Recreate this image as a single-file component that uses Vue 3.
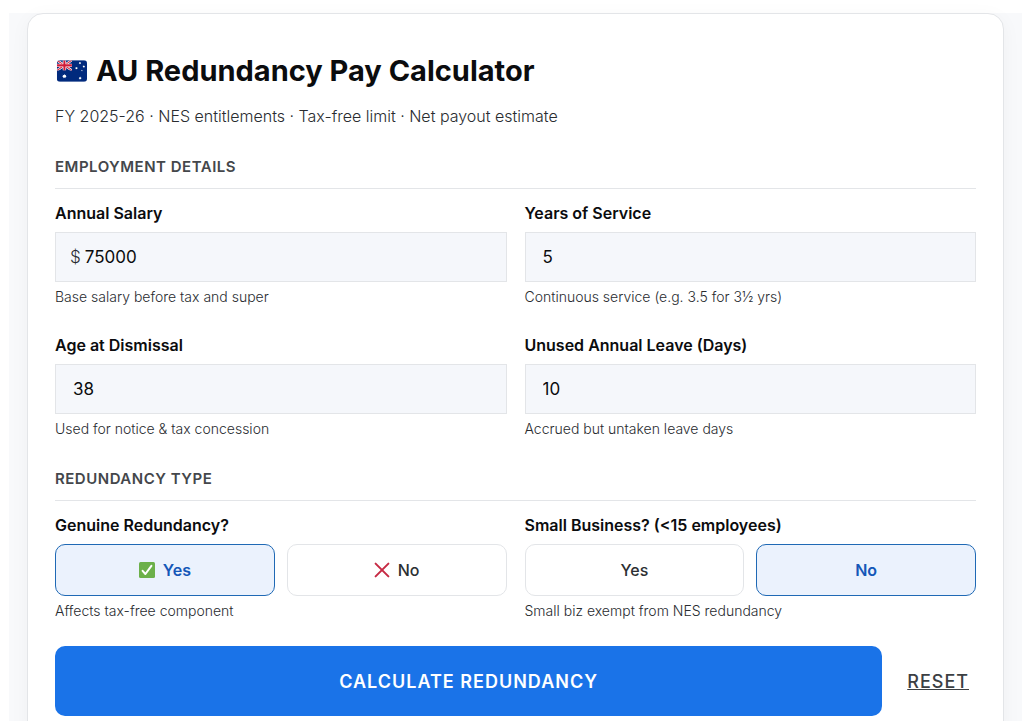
<script setup>
import { reactive } from 'vue'

const defaults = { salary: '75000', years: '5', age: '38', leave: '10', genuine: 'yes', small: 'no' }
const form = reactive({ ...defaults })
const reset = () => Object.assign(form, defaults)
</script>

<template>
  <main class="page">
    <div class="backdrop">
      <form class="card" @submit.prevent>
        <h1 class="title">
          <svg class="flag" viewBox="-2 0 34 23" role="img" aria-label="Australia">
            <defs>
              <clipPath id="flag-shape"><rect width="32" height="23" rx="3.2" /></clipPath>
              <clipPath id="canton"><rect width="16" height="11" /></clipPath>
              <polygon id="star" points="0,-1 .26,-.42 .78,-.62 .6,-.05 .97,.22 .45,.42 .43,.9 0,.58 -.43,.9 -.45,.42 -.97,.22 -.6,-.05 -.78,-.62 -.26,-.42" />
            </defs>
            <g clip-path="url(#flag-shape)">
              <rect width="32" height="23" fill="#012a7d" />
              <g clip-path="url(#canton)">
                <path d="M0 0L16 11M16 0L0 11" stroke="#fff" stroke-width="2.6" />
                <path d="M0 0L16 11M16 0L0 11" stroke="#d22b45" stroke-width="1.2" />
                <path d="M8 0V11M0 5.5H16" stroke="#fff" stroke-width="3.6" />
                <path d="M8 0V11M0 5.5H16" stroke="#cf1b38" stroke-width="2.2" />
              </g>
              <g fill="#fff">
                <use href="#star" transform="translate(8 17) scale(2.4)" />
                <use href="#star" transform="translate(24.5 3) scale(1.4)" />
                <use href="#star" transform="translate(20.8 8.5) scale(1.4)" />
                <use href="#star" transform="translate(28.6 6.7) scale(1.4)" />
                <use href="#star" transform="translate(24.7 19) scale(1.6)" />
                <use href="#star" transform="translate(26.6 11) scale(.8)" />
              </g>
            </g>
          </svg>
          <span>AU Redundancy Pay Calculator</span>
        </h1>
        <p class="subtitle">FY 2025-26 · NES entitlements · Tax-free limit · Net payout estimate</p>

        <h2 class="section">Employment Details</h2>
        <div class="grid">
          <div class="field">
            <label class="label" for="salary">Annual Salary</label>
            <div class="box money">
              <span class="prefix">$</span>
              <input id="salary" v-model="form.salary" class="input" type="text" inputmode="decimal" />
            </div>
            <p class="hint">Base salary before tax and super</p>
          </div>
          <div class="field">
            <label class="label" for="years">Years of Service</label>
            <div class="box"><input id="years" v-model="form.years" class="input" type="text" inputmode="decimal" /></div>
            <p class="hint">Continuous service (e.g. 3.5 for 3½ yrs)</p>
          </div>
          <div class="field">
            <label class="label" for="age">Age at Dismissal</label>
            <div class="box"><input id="age" v-model="form.age" class="input" type="text" inputmode="numeric" /></div>
            <p class="hint">Used for notice &amp; tax concession</p>
          </div>
          <div class="field">
            <label class="label" for="leave">Unused Annual Leave (Days)</label>
            <div class="box"><input id="leave" v-model="form.leave" class="input" type="text" inputmode="numeric" /></div>
            <p class="hint">Accrued but untaken leave days</p>
          </div>
        </div>

        <h2 class="section">Redundancy Type</h2>
        <div class="grid">
          <div class="field" role="group" aria-labelledby="genuine">
            <span id="genuine" class="label">Genuine Redundancy?</span>
            <div class="choices">
              <button type="button" class="choice" :class="{ on: form.genuine === 'yes' }" @click="form.genuine = 'yes'">
                <svg class="mark" viewBox="0 0 16 16" aria-hidden="true">
                  <rect width="16" height="16" rx="1.5" fill="#6cb04a" />
                  <path d="M3.6 8.8L6.4 12L12.4 3.8" fill="none" stroke="#fff" stroke-width="2" stroke-linecap="round" stroke-linejoin="round" />
                </svg>
                <span>Yes</span>
              </button>
              <button type="button" class="choice" :class="{ on: form.genuine === 'no' }" @click="form.genuine = 'no'">
                <svg class="mark" viewBox="0 0 16 16" aria-hidden="true">
                  <path d="M1.6 1.6L14.4 14.4M14.4 1.6L1.6 14.4" stroke="#c62a44" stroke-width="2" stroke-linecap="round" />
                </svg>
                <span>No</span>
              </button>
            </div>
            <p class="hint">Affects tax-free component</p>
          </div>
          <div class="field" role="group" aria-labelledby="small">
            <span id="small" class="label">Small Business? (&lt;15 employees)</span>
            <div class="choices">
              <button type="button" class="choice" :class="{ on: form.small === 'yes' }" @click="form.small = 'yes'">Yes</button>
              <button type="button" class="choice" :class="{ on: form.small === 'no' }" @click="form.small = 'no'">No</button>
            </div>
            <p class="hint">Small biz exempt from NES redundancy</p>
          </div>
        </div>

        <div class="actions">
          <button type="submit" class="calculate">Calculate Redundancy</button>
          <button type="button" class="reset" @click="reset">Reset</button>
        </div>
      </form>
    </div>
  </main>
</template>

<style>
body {
  margin: 0;
  background: #fff;
}
html {
  scrollbar-width: none;
}
</style>

<style scoped>
.page {
  padding: 13px 9px 0;
  font-family: Inter, "Liberation Sans", sans-serif;
  color: #0b0c0e;
}
.backdrop {
  padding: 0 18px;
  background: #f8f9fb;
}
.card {
  padding: 37px 27px 28px;
  border: 1px solid #e3e5e8;
  border-radius: 16px;
  background: #fff;
  box-shadow: 0 4px 20px rgba(0, 0, 0, 0.04);
}
.title {
  display: flex;
  align-items: center;
  gap: 9px;
  margin: 0;
  font-size: 29px;
  line-height: 40px;
  font-weight: 700;
}
.flag {
  width: 32px;
  height: 22px;
}
.subtitle {
  margin: 14px 0 0;
  font-size: 16px;
  line-height: 22px;
  font-weight: 300;
  color: #292c30;
}
.section {
  margin: 30px 0 12px;
  padding-bottom: 11px;
  border-bottom: 1px solid #e3e5e8;
  font-size: 15px;
  line-height: 20px;
  font-weight: 600;
  letter-spacing: 0.5px;
  text-transform: uppercase;
  color: #44474b;
}
.grid {
  display: grid;
  grid-template-columns: 1fr 1fr;
  gap: 26px 18px;
}
.label {
  display: block;
  margin-bottom: 7px;
  font-size: 16px;
  line-height: 24px;
  font-weight: 600;
}
.box {
  display: flex;
  align-items: center;
  height: 48px;
  padding: 0 17px;
  border: 1px solid #e3e5e8;
  background: #f5f7fb;
  font-size: 17px;
}
.money {
  padding-left: 14px;
  gap: 4px;
}
.prefix {
  font-weight: 300;
  color: #292c30;
}
.input {
  flex: 1;
  min-width: 0;
  padding: 0;
  border: 0;
  outline: 0;
  background: transparent;
  font: inherit;
  color: inherit;
}
.hint {
  margin: 5px 0 0;
  font-size: 14px;
  line-height: 20px;
  font-weight: 300;
  color: #292c30;
}
.choices {
  display: grid;
  grid-template-columns: 1fr 1fr;
  gap: 12px;
}
.choice {
  display: flex;
  align-items: center;
  justify-content: center;
  gap: 8px;
  height: 52px;
  padding: 0;
  border: 1px solid #e3e5e8;
  border-radius: 10px;
  background: #fff;
  font: inherit;
  font-size: 16px;
  font-weight: 500;
  color: #2c2f33;
}
.choice.on {
  border-color: #1f69b5;
  background: #ebf2fd;
  font-weight: 600;
  color: #1557b8;
}
.mark {
  width: 16px;
  height: 16px;
}
.actions {
  display: flex;
  gap: 18px;
  margin-top: 25px;
}
.calculate {
  flex: 1;
  height: 70px;
  border: 0;
  border-radius: 10px;
  background: #1a73e8;
  font: inherit;
  font-size: 18px;
  font-weight: 600;
  letter-spacing: 1px;
  text-transform: uppercase;
  color: #fff;
}
.reset {
  padding: 0 7px;
  border: 0;
  background: none;
  font: inherit;
  font-size: 18px;
  font-weight: 500;
  letter-spacing: 1px;
  text-transform: uppercase;
  text-decoration: underline;
  color: #3c4043;
}
</style>
